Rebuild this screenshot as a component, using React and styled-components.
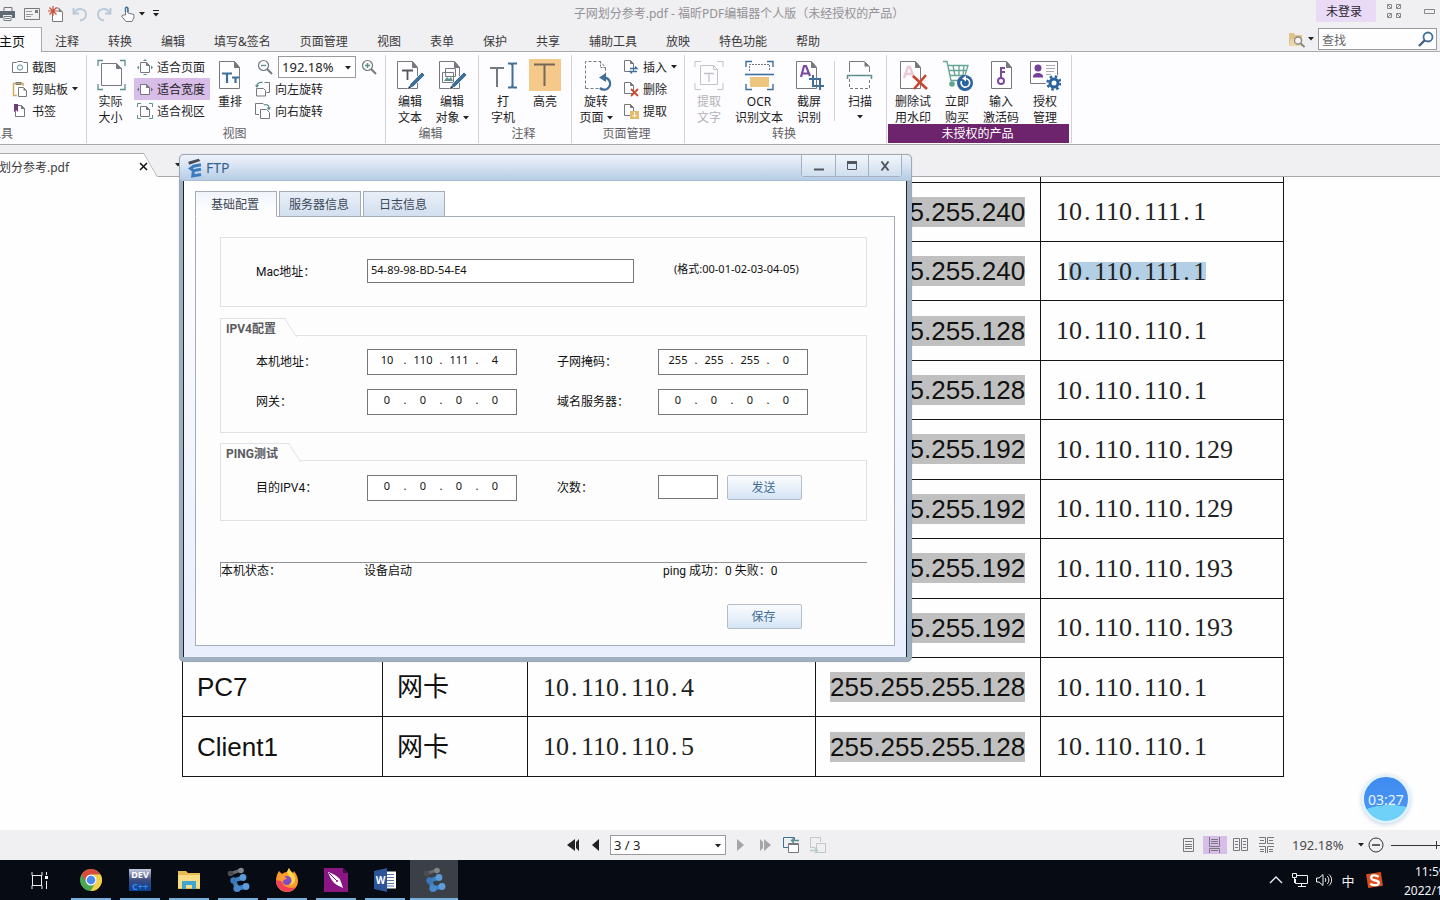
import React from 'react';
import styled, { createGlobalStyle, css } from 'styled-components';

const Global = createGlobalStyle`
  * { box-sizing: border-box; }
  html, body { margin: 0; padding: 0; }
  body {
    font-family: "Noto Sans", "Noto Sans CJK SC", sans-serif;
    font-size: 12px; color: #1e1e1e; overflow: hidden;
  }
  button, input, select { font-family: inherit; font-size: inherit; color: inherit; margin: 0; }
  button { border: 0; background: none; padding: 0; }
  svg { display: block; flex: none; }
`;

/* ---------- shared ---------- */
const Page = styled.div`
  position: relative; min-height: 100vh; display: flex; flex-direction: column;
  background: #f0eff1; overflow: hidden;
`;
const Icon = ({ w = 16, h, box, children }) => (
  <svg width={w} height={h || w} viewBox={box || `0 0 ${w} ${h || w}`} fill="none" aria-hidden="true">{children}</svg>
);
const Caret = ({ color = '#222' }) => (
  <svg width="6" height="4" viewBox="0 0 6 4" aria-hidden="true"><path d="M0 0h6L3 3.5z" fill={color} /></svg>
);

/* ---------- title bar ---------- */
const TitleBar = styled.header`
  height: 28px; display: flex; align-items: flex-start;
`;
const QuickTools = styled.div`
  width: 162px; height: 28px; display: flex; align-items: center; gap: 8px;
`;
const ToolButton = styled.button`
  display: flex; align-items: center; gap: 3px;
`;
const Title = styled.h1`
  flex: 1; margin: 0; text-align: center; font-size: 12px; font-weight: 400; line-height: 28px; color: #939296;
`;
const TitleRight = styled.div`
  width: 124px; display: flex; align-items: flex-start; overflow: hidden;
`;
const Login = styled.button`
  width: 60px; height: 22px; padding-right: 4px; background: #e9daf6; color: #2a2330; line-height: 24px;
`;
const WinTool = styled.button`
  height: 22px; margin-left: ${p => p.$gap}px; display: flex; align-items: center;
`;

/* ---------- menu ---------- */
const MenuBar = styled.div`
  height: 24px; display: flex; border-bottom: 1px solid #a9a8ab;
`;
const Menu = styled.nav`display: flex; flex: 1; height: 24px; margin-top: -1px;`;
const MenuItem = styled.button`
  height: 25px; padding: 3px 16px 0 13px; line-height: 24px; color: #3a3a3c; white-space: nowrap;
  ${p => p.$active && css`
    margin-left: -14px; font-size: 13px; background: #fdfcfe; color: #111; padding-top: 1px;
    border-top: 1px solid #a9a8ab; border-right: 1px solid #a9a8ab;
  `}
`;
const SearchArea = styled.div`
  display: flex; align-items: center; gap: 4px; padding-right: 3px; height: 22px;
`;
const SearchBox = styled.label`
  width: 119px; height: 22px; display: flex; align-items: center; padding: 0 2px 0 3px;
  border: 1px solid #9a999c; background: #fefdff;
  input { flex: 1; min-width: 0; border: 0; padding: 2px 0 0; background: none; outline: none; }
  input::placeholder { color: #666; opacity: 1; }
`;

/* ---------- ribbon ---------- */
const Ribbon = styled.section`
  height: 93px; display: flex; background: #fdfcfe; border-bottom: 1px solid #a9a8ab; padding-top: 2px;
`;
const Group = styled.div`
  width: ${p => p.$w}px; height: 88px; display: flex; flex-direction: column; flex: none;
  border-right: 1px solid #d3d1d6; margin-top: 1px;
`;
const GroupBody = styled.div`
  height: 69px; display: flex; padding-left: ${p => p.$pad || 0}px;
`;
const GroupLabel = styled.div`
  height: 19px; line-height: 20px; text-align: center; color: #636166; padding-right: 3px;
  ${p => p.$start && css`text-align: left; margin-left: -11px;`}
  ${p => p.$brand && css`background: #6d246c; color: #fff; margin: 0 2px 0 1px; padding-right: 2px;`}
`;
const BigBtn = styled.button`
  width: ${p => p.$w}px; display: flex; flex-direction: column; align-items: center; padding-top: 4px; flex: none;
  line-height: 16px; color: ${p => (p.$off ? '#b4b2b8' : '#1e1e1e')}; white-space: nowrap;
`;
const BigIcon = styled.span`
  width: 32px; height: 32px; margin-bottom: 3px; display: flex; flex: none; align-items: center; justify-content: center;
  background: ${p => (p.$hot ? '#f5c98a' : 'transparent')};
`;
const Line = styled.span`display: flex; align-items: center; gap: 3px; height: 16px;`;
const Stack = styled.div`
  display: flex; flex-direction: column; padding-top: 1px; padding-left: ${p => p.$pad || 0}px;
`;
const SmallBtn = styled.button`
  height: 22px; display: flex; align-items: center; gap: 4px; padding: 0 5px 0 3px; white-space: nowrap;
  background: ${p => (p.$on ? '#d8bde8' : 'transparent')};
`;
const InnerRule = styled.i`width: 1px; height: 60px; margin: 6px 0 0 1px; background: #d3d1d6;`;
const ZoomRow = styled.div`display: flex; align-items: center; gap: 5px; height: 22px; margin-left: 5px;`;
const Picker = styled.label`
  position: relative; display: block; width: ${p => p.$w}px; height: ${p => p.$h}px;
  select {
    appearance: none; width: 100%; height: 100%; padding: 0 3px; font-size: 13px; line-height: 18px; outline: none;
    border: 1px solid #9a999c; border-radius: 0; background: #fff; color: #222;
  }
  svg { position: absolute; right: 5px; top: 50%; margin-top: -1px; }
`;

/* ---------- document strip ---------- */
const TabStrip = styled.div`
  height: 32px; padding-top: 8px; display: flex; align-items: center; gap: 17px; border-bottom: 1px solid #a9a8ab;
`;
const DocTab = styled.div`
  position: relative; width: 158px; height: 24px; margin-bottom: -1px; padding: 2px 10px 0 0;
  display: flex; align-items: center; justify-content: space-between; color: #3c3c3e;
  background: #fefefe; border-top: 1px solid #a9a8ab; clip-path: polygon(0 0, 144px 0, 158px 100%, 0 100%);
`;
const TabEdge = styled.span`position: absolute; right: 0; top: -1px;`;
const TabName = styled.span`margin-left: -1px; flex: 1;`;
const TabClose = styled.button`color: #111;`;

/* ---------- document ---------- */
const Doc = styled.main`
  position: relative; flex: 1; min-height: 600px; background: #fefefe; padding-left: 182px;
`;
const Sheet = styled.table`
  width: 1102px; height: 600px; table-layout: fixed; border-collapse: collapse; color: #111;
  font-family: "Liberation Sans", "Noto Sans CJK SC", sans-serif; font-size: 26px; line-height: 30px;
  td { border: 1px solid #151515; padding: 0 14px; white-space: nowrap; }
  tr:first-child td { height: 5px; border-top: 0; }
`;
const Grey = styled.span`background: #c0c0c0;`;
const Addr = styled.span`
  font-family: "Liberation Serif", serif; padding-left: 1px; color: #222;
  i { display: inline-block; width: 12px; padding-left: 2px; font-style: normal; text-indent: 0; }
`;
const Marked = styled.span`background: linear-gradient(#b3cfe6, #b3cfe6) center / 100% 18px no-repeat;`;
const Timer = styled.div`
  position: absolute; right: 30px; bottom: 7px; width: 48px; height: 48px; border-radius: 50%;
  border: 2px solid #dff3ff; box-shadow: 0 1px 5px rgba(60, 110, 170, .35); overflow: hidden;
  display: flex; align-items: center; justify-content: center; color: #eaf6ff; font-size: 14px;
  background: radial-gradient(ellipse 34px 14px at 26px 42px, #6fd0f8 98%, transparent), linear-gradient(#3f8af0, #4c9bf6);
`;

/* ---------- status bar ---------- */
const StatusBar = styled.footer`
  height: 30px; display: flex; align-items: center; justify-content: space-between; padding-left: 567px;
`;
const PageNav = styled.div`display: flex; align-items: center; gap: 11px;`;
const ViewTools = styled.div`display: flex; align-items: center; width: 264px; overflow: hidden;`;
const ViewBtn = styled.button`
  width: 26px; height: 18px; display: flex; align-items: center; justify-content: center; flex: none;
  span { height: 18px; width: 24px; display: flex; align-items: center; justify-content: center; background: ${p => (p.$on ? '#d8bde8' : 'none')}; }
`;
const ZoomText = styled.span`width: 66px; margin-left: 12px; font-size: 13px; color: #4a4a4c; flex: none;`;
const ZoomOut = styled.button`margin: 0 7px 0 4px;`;
const Slider = styled.input`
  appearance: none; width: 90px; height: 12px; flex: none; outline: none;
  background: linear-gradient(#333, #333) 0 6px / 100% 1px no-repeat;
  &::-webkit-slider-thumb { appearance: none; width: 1px; height: 8px; background: #333; }
`;

/* ---------- task bar ---------- */
const TaskBar = styled.div`
  height: 40px; display: flex; background: #060b14; color: #f2f2f2;
`;
const TaskView = styled.button`width: 67px; padding-left: 12px; height: 40px; display: flex; justify-content: center; align-items: center;`;
const Task = styled.button`
  width: 49px; height: 40px; display: flex; align-items: center; justify-content: center; padding-right: 1px;
  background: linear-gradient(#76aede, #76aede) 4px 100% / 40px 2px no-repeat;
  ${p => p.$on && css`width: 48px; background: linear-gradient(#76aede, #76aede) bottom center / 48px 2px no-repeat, #3b3f47;`}
`;
const Tray = styled.div`
  margin-left: auto; width: 172px; display: flex; align-items: center; overflow: hidden; gap: 8px; white-space: nowrap;
`;
const Clock = styled.time`
  width: 36px; margin-left: 12px; line-height: 19px; flex: none; padding-top: 1px;
  span { display: block; }
  span:first-child { padding-left: 11px; }
`;
const Ime = styled.span`width: 16px; text-align: center; font-size: 13px;`;

/* ---------- FTP window ---------- */
const Win = styled.section`
  position: absolute; left: 179px; top: 154px; width: 733px; padding: 0 4px 4px 3px;
  border: 1px solid #a0a8b2; border-radius: 5px; background: #9fb0c3;
  box-shadow: 0 0 1px rgba(0, 0, 0, .3); color: #111; font-family: Roboto, "Noto Sans CJK SC", sans-serif;
`;
const WinTitle = styled.header`
  height: 26px; margin: 0 -4px 0 -3px; padding: 0 9px 0 7px; display: flex; align-items: flex-start; border-radius: 4px 4px 0 0;
  background: linear-gradient(#edf2fa, #dce6f4 35%, #b5cde5 95%, #a5b6ca);
`;
const WinName = styled.h2`
  flex: 1; margin: 0 0 0 3px; font: 400 14px/26px "Noto Sans", sans-serif; color: #35618f;
`;
const WinBtns = styled.div`
  display: flex; height: 22px; border: 1px solid #a3b0c2; border-top: 0; border-radius: 0 0 4px 4px;
`;
const WinBtn = styled.button`
  width: 33px; height: 21px; display: flex; align-items: center; justify-content: center;
  color: #50565f; background: linear-gradient(#f2f6fb, #cfdeee);
  & + & { border-left: 1px solid #a3b0c2; }
`;
const WinBody = styled.div`
  padding: 10px 11px 11px; border: 1px solid #1c222b; border-width: 0 1px;
  background: linear-gradient(#fff 10%, #f6f8fe 40%, #e9effd);
`;
const Tabs = styled.div`display: flex; gap: 2px; margin-bottom: -1px;`;
const Tab = styled.button`
  width: 82px; height: 26px; padding-right: 2px; line-height: 26px; border: 1px solid #a6abb8; color: #3b4656;
  background: ${p => (p.$on ? 'linear-gradient(#f0f4fb, #fdfdfe 70%)' : 'linear-gradient(#e9eff8, #d2dfef)')};
  border-bottom-color: ${p => (p.$on ? '#fdfdfe' : '#a6abb8')};
`;
const Panel = styled.div`
  height: 430px; border: 1px solid #a6abb8; background: #fdfdfe; padding: 20px 27px 0 24px;
`;
const Box = styled.div`
  height: ${p => p.$h}px; border: 1px solid #e0e1e6; padding: ${p => p.$top}px 0 0 35px;
  display: grid; grid-template-columns: 111px 190px 101px 1fr; grid-auto-rows: 26px; row-gap: 14px; align-items: start;
`;
const Caption = styled.h3`
  position: relative; width: ${p => p.$w}px; height: 18px; margin: ${p => p.$gap}px 0 -1px; padding-left: 5px;
  font-size: 12px; line-height: 20px; font-weight: 700; color: #5a5b60; background: #fdfdfe;
  border: 1px solid #e0e1e6; border-width: 1px 0 0 1px; white-space: nowrap;
  span { position: relative; z-index: 1; }
  &::after {
    content: ""; position: absolute; top: -1px; right: -11px; width: 16px; height: 18px; background: #fdfdfe;
    border: 1px solid #e0e1e6; border-width: 1px 1px 0 0; transform: skewX(33deg); transform-origin: center;
  }
`;
const Label = styled.label`line-height: 26px; height: 26px; color: #111; white-space: nowrap;`;
const Hint = styled.span`
  grid-column: 4; padding-left: 16px; white-space: nowrap;
  font: 11px/20px "Noto Sans", "Noto Sans CJK SC", sans-serif;
`;
const TextBox = styled.input`
  width: ${p => p.$w}px; height: 24px; padding: 0 3px 3px; border: 1px solid #76777c; background: #fff;
  outline: none; font: 11px "Noto Sans", sans-serif; ${p => p.$wide && css`grid-column: 2 / 4;`}
`;
const IpBox = styled.div`
  width: 150px; height: 26px; padding: 0 0 6px 3px; border: 1px solid #76777c; background: #fff;
  display: flex; align-items: center; font-size: 11px; font-family: "Noto Sans", sans-serif;
  input { width: 32px; height: 18px; border: 0; padding: 0; text-align: center; background: none; outline: none; }
  span { width: 4px; text-align: center; }
`;
const Pair = styled.div`display: flex; gap: 9px;`;
const Push = styled.button`
  width: 75px; height: 25px; padding: 0 2px 2px 0; border: 1px solid #b4bcc8; border-radius: 2px; color: #3f6c99;
  background: linear-gradient(#fafcfe, #e6eff9 60%, #d3e3f4);
`;
const State = styled.div`
  height: 42px; margin-top: 41px; border-top: 1px solid #8f9196; display: grid;
  grid-template-columns: 144px 299px 1fr; line-height: 17px;
  span:first-child { border-left: 1px solid #8f9196; height: 14px; }
`;
const SaveRow = styled.div`padding-left: 507px;`;

/* ---------- drawings ---------- */
const G = '#77787d';
const T = '#5d8f8f';
const B = '#3f6f9b';

const MiniPage = ({ x = 0, y = 0, c = G }) => (
  <g transform={`translate(${x} ${y})`} stroke={c}><path d="M.5.5h6l3 3v8h-9z" fill="#fefdff" /><path d="M6.5.5v3h3z" fill={c} /></g>
);
const MidPage = () => (
  <g stroke={G}><path d="M3.500 3.500h6l3 3v7h-9z" fill="#fefdff" /><path d="M9.500 3.500v3h3z" fill={G} /></g>
);
const BigPage = ({ x = 4, y = 2, c = G }) => (
  <g transform={`translate(${x} ${y})`} stroke={c}>
    <path d="M.5.5h15l5 6v21H.5z" fill="#fefdff" /><path d="M15.5.5v6h5z" fill={c} />
  </g>
);
const Pencil = () => (
  <g><path d="M14 30l2-5L28 13l3 3-12 12z" fill={B} stroke="#fff" strokeWidth=".8" /><path d="M14 30l1-3 2 2z" fill="#234" /></g>
);

const I = {
  actual: <><path d="M3 7V1.500h5M25 1.500h5V7M3 25v5.500h5M30 25v5.500h-5" stroke={T} strokeWidth="1.300" /><g stroke={G}><path d="M6.500 4.500h15l5 5v17h-20z" fill="#fefdff" /><path d="M21.500 4.500v5h5z" fill={G} /></g></>,
  reflow: <><BigPage x={5} y={2} /><path d="M8 14.500h10M13 14v10M18 18.500h7M21.500 18v6" stroke={B} strokeWidth="2.200" /></>,
  editText: <><BigPage x={3} y={2} /><path d="M8 11.500h11M13.500 11v10" stroke="#55565c" strokeWidth="1.800" /><Pencil /></>,
  editObj: <><BigPage x={3} y={2} /><path d="M9.500 9.500h10v8h-10zM6.500 13.500h11v10h-11z" fill="#fefdff" stroke={G} /><path d="M8 22l3-4 2 2 2-2 2 4z" fill={T} /><Pencil /></>,
  typer: <><path d="M3 9h14M10 9v19" stroke={G} strokeWidth="2" /><path d="M21 4.500h3l1 1 1-1h4M21 28.500h3l1-1 1 1h4M25.500 5v23" stroke={B} strokeWidth="2" /></>,
  high: <path d="M5 5.500h21M15.500 5v22" stroke="#75685b" strokeWidth="2" />,
  rotPage: <><g stroke={G}><path d="M5.500 29.500v-27h15l5 6v8" strokeDasharray="3 2" /><path d="M20.500 2.500v6h5" strokeDasharray="2 1" /><path d="M5.500 29.500h13" strokeDasharray="3 2" /></g><path d="M20 29a6 6 0 1 0 2-10" stroke={B} strokeWidth="2.400" /><path d="M26 14v9l-7-4.500z" fill={B} /></>,
  extText: <g stroke="#c4c2ca"><path d="M2 8V2.500h6M24 2.500h6V8M2 24v6.500h6M30 24v6.500h-6" /><path d="M7.500 6.500h13l4 4v15h-17zM20.500 6.500v4h4" /><path d="M11 14.500h10M16 14v9" strokeWidth="1.300" /></g>,
  ocr: <><path d="M3 8V2.500h6M24 2.500h6V8M3 25v5.500h6M30 25v5.500h-6" stroke={B} strokeWidth="1.400" /><path d="M6.500 12V5.500h20V12" stroke={G} strokeDasharray="2 1" /><path d="M2 15.500h29" stroke={B} strokeWidth="1.600" /><path d="M7 18h19v10H7z" fill="#ecc57f" /></>,
  shot: <><BigPage x={3} y={2} /><path d="M8 18l3-11h2l4 10M9.500 14.500h6" stroke="#7b4aa0" strokeWidth="2.200" /><path d="M20 16v11h11M16 20h11v11" stroke={B} strokeWidth="2" /></>,
  scan: <><path d="M5.500 13V2.500h15l5 5V13" stroke={G} /><path d="M20.500 2.500v5h5z" fill={G} /><path d="M3.500 20v-3.500h24V20" stroke={T} strokeWidth="1.500" /><path d="M5.500 20v9.500h20V20" stroke={G} strokeDasharray="3 2" /></>,
  wmark: <><BigPage x={3} y={2} /><path d="M7 19l4-11h2l4 11M9 15h6" stroke="#ecc9d4" strokeWidth="2.400" /><path d="M16 17l14 13M29 16L17 30" stroke="#c9452f" strokeWidth="2.600" /></>,
  cart: <><path d="M2 2.500h4l4 19h10M7 6.500h20l-3 10H9M12 6.500l2 10M18 6.500v10M23 6.500l-1 10M8 11.500h17" stroke="#63a58e" strokeWidth="1.300" /><circle cx="11" cy="25" r="2.800" fill="#63a58e" /><circle cx="24" cy="24" r="8" fill="#2b62a0" /><path d="M20.500 22a4.300 4.300 0 1 0 4-2.500" stroke="#fff" strokeWidth="1.600" /><path d="M25 16.500v6l-4-3z" fill="#fff" /></>,
  keyPage: <><BigPage x={6} y={2} /><circle cx="16" cy="22" r="3" stroke="#7b4aa0" strokeWidth="2" /><path d="M16 19V8M16 9h4M16 13h4" stroke="#7b4aa0" strokeWidth="2" /></>,
  auth: <><path d="M1.500 2.500h27v22h-27z" fill="#fefdff" stroke={G} /><circle cx="9" cy="9" r="3.500" fill="#74409a" /><path d="M4 18.500c-1-6 11-6 10 0z" fill="#74409a" /><path d="M17 6.500h9M17 9.500h9M17 12.500h8M17 15.500h5" stroke="#aaa" /><circle cx="25" cy="24" r="8.500" fill="#fefdff" /><circle cx="25" cy="24" r="4" stroke="#2b62a0" strokeWidth="3" /><circle cx="25" cy="24" r="6.500" stroke="#2b62a0" strokeWidth="2.400" strokeDasharray="2.550 2.550" /></>,
  camera: <><path d="M.500 3.500h4l1-1h5l1 1h4v10H.500z" stroke={G} /><circle cx="8" cy="8.500" r="2.600" stroke={T} /></>,
  paste: <><path d="M5 14.500H1.500v-12H11V5" stroke="#d2ac5c" strokeWidth="1.500" /><path d="M4 1.500h5v2H4z" stroke={G} /><path d="M6.500 6.500h5l3 3v6h-8z" fill="#fefdff" stroke={G} /><path d="M11.500 6.500v3h3z" fill={G} /></>,
  bookmark: <><g transform="translate(3 2)"><MiniPage /></g><path d="M2 1h4v8L4 7 2 9z" fill="#6e3d7e" /></>,
  fitPage: <><MidPage /><path d="M8 0l2 2H6zM8 17l2-2H6zM0 8.500l2-2v4zM16 8.500l-2-2v4z" fill={T} /></>,
  fitWidth: <><MidPage /><path d="M0 8.500l2-2v4zM16 8.500l-2-2v4z" fill="#6f6a86" /></>,
  fitView: <><MidPage /><path d="M.500 4V.500H4M12 .500h3.500V4M.500 12v3.500H4M12 15.500h3.500V12" stroke={T} /></>,
  minus: <><circle cx="6.500" cy="6.500" r="5" stroke={G} strokeWidth="1.200" /><path d="M4 6.500h5" stroke={T} strokeWidth="1.400" /><path d="M10 10l5 5" stroke={G} strokeWidth="2" /></>,
  plus: <><circle cx="6.500" cy="6.500" r="5" stroke={G} strokeWidth="1.200" /><path d="M4 6.500h5M6.500 4v5" stroke={T} strokeWidth="1.400" /><path d="M10 10l5 5" stroke={G} strokeWidth="2" /></>,
  rotL: <><path d="M9.500 1.500h5v10h-3M1.500 7.500h7l2 2v5.500h-9z" stroke={G} /><path d="M1.500 6c0-3 2-5 6-4.500" stroke={T} strokeWidth="1.300" /><path d="M0 4h4L2 7z" fill={T} /></>,
  rotR: <><path d="M4 11.500H.500v-11H8l1 1" stroke={G} /><path d="M5.500 6.500h6l3 3v6h-9z" fill="#fefdff" stroke={G} /><path d="M9 2c3-1 5 0 5 3" stroke={T} strokeWidth="1.300" /><path d="M11.500 4.500h4.500l-2 3z" fill={T} /></>,
  insert: <><MiniPage x={1} y={1} /><path d="M7 9.500h7l-2-2M14 12.500H7l2 2" stroke={B} strokeWidth="1.300" /></>,
  del: <><MiniPage x={1} y={1} /><path d="M8 8l7 7M15 8l-7 7" stroke="#cb4c36" strokeWidth="1.800" /></>,
  ext: <><MiniPage x={1} y={1} /><path d="M7 8h9v8H7z" fill="#e3bb6b" /><path d="M11.500 9v5M9.500 12l2 2 2-2" stroke="#fff" /></>,
};

const Ensp = () => (
  <Icon w={28}>
    <g strokeLinecap="round" strokeLinejoin="round">
      <path d="M7 7.500l10-3.500" stroke="#66676b" strokeWidth="3.400" />
      <circle cx="6.500" cy="7.500" r="2.800" fill="#4c4d51" /><circle cx="17" cy="4.500" r="2.800" fill="#85868a" />
      <path d="M19 11.500L10 14.500l3 8 9-2" stroke="#3f7fc0" strokeWidth="4.400" />
      <circle cx="19" cy="11.500" r="3.400" fill="#5a9bd8" /><circle cx="9.500" cy="14.500" r="3.200" fill="#3b78b8" />
      <circle cx="13" cy="22.500" r="3.600" fill="#4a8aca" /><circle cx="22" cy="20.500" r="3.400" fill="#5b9edb" />
    </g>
  </Icon>
);

/* ---------- ribbon parts ---------- */
const Big = ({ icon, lines, w, off, hot, caret }) => (
  <BigBtn type="button" $w={w} $off={off} disabled={off}>
    <BigIcon $hot={hot}><Icon w={32}>{I[icon]}</Icon></BigIcon>
    {lines.map((t, i) => <Line key={t}>{t}{caret && i === lines.length - 1 && <Caret />}</Line>)}
  </BigBtn>
);
const Small = ({ icon, text, on, caret }) => (
  <SmallBtn type="button" $on={on}><Icon>{I[icon]}</Icon>{text}{caret && <Caret />}</SmallBtn>
);
const RibbonView = () => (
  <Ribbon>
    <Group $w={87}>
      <GroupBody $pad={9}>
        <Stack><Small icon="camera" text="截图" /><Small icon="paste" text="剪贴板" caret /><Small icon="bookmark" text="书签" /></Stack>
      </GroupBody>
      <GroupLabel $start>工具</GroupLabel>
    </Group>
    <Group $w={299}>
      <GroupBody>
        <Big icon="actual" w={47} lines={['实际', '大小']} />
        <Stack><Small icon="fitPage" text="适合页面" /><Small icon="fitWidth" text="适合宽度" on /><Small icon="fitView" text="适合视区" /></Stack>
        <Big icon="reflow" w={40} lines={['重排']} />
        <Stack $pad={2}>
          <ZoomRow>
            <ToolButton type="button" aria-label="缩小"><Icon>{I.minus}</Icon></ToolButton>
            <Picker $w={78} $h={22}><select aria-label="缩放"><option>192.18%</option></select><Caret /></Picker>
            <ToolButton type="button" aria-label="放大"><Icon>{I.plus}</Icon></ToolButton>
          </ZoomRow>
          <Small icon="rotL" text="向左旋转" /><Small icon="rotR" text="向右旋转" />
        </Stack>
      </GroupBody>
      <GroupLabel>视图</GroupLabel>
    </Group>
    <Group $w={93}>
      <GroupBody $pad={3}><Big icon="editText" w={42} lines={['编辑', '文本']} /><Big icon="editObj" w={42} lines={['编辑', '对象']} caret /></GroupBody>
      <GroupLabel>编辑</GroupLabel>
    </Group>
    <Group $w={93}>
      <GroupBody $pad={3}><Big icon="typer" w={42} lines={['打', '字机']} /><Big icon="high" w={42} hot lines={['高亮']} /></GroupBody>
      <GroupLabel>注释</GroupLabel>
    </Group>
    <Group $w={113}>
      <GroupBody>
        <Big icon="rotPage" w={48} lines={['旋转', '页面']} caret />
        <Stack><Small icon="insert" text="插入" caret /><Small icon="del" text="删除" /><Small icon="ext" text="提取" /></Stack>
      </GroupBody>
      <GroupLabel>页面管理</GroupLabel>
    </Group>
    <Group $w={202}>
      <GroupBody>
        <Big icon="extText" w={48} off lines={['提取', '文字']} />
        <Big icon="ocr" w={52} lines={['OCR', '识别文本']} />
        <Big icon="shot" w={48} lines={['截屏', '识别']} />
        <InnerRule />
        <Big icon="scan" w={50} lines={['扫描', '']} caret />
      </GroupBody>
      <GroupLabel>转换</GroupLabel>
    </Group>
    <Group $w={185}>
      <GroupBody $pad={4}>
        <Big icon="wmark" w={44} lines={['删除试', '用水印']} />
        <Big icon="cart" w={44} lines={['立即', '购买']} />
        <Big icon="keyPage" w={44} lines={['输入', '激活码']} />
        <Big icon="auth" w={44} lines={['授权', '管理']} />
      </GroupBody>
      <GroupLabel $brand>未授权的产品</GroupLabel>
    </Group>
  </Ribbon>
);

/* ---------- document table ---------- */
const ROWS = [
  ['', '', '', '255.255.255.240', '10.110.111.1'],
  ['', '', '', '255.255.255.240', '10.110.111.1'],
  ['', '', '', '255.255.255.128', '10.110.110.1'],
  ['', '', '', '255.255.255.128', '10.110.110.1'],
  ['', '', '', '255.255.255.192', '10.110.110.129'],
  ['', '', '', '255.255.255.192', '10.110.110.129'],
  ['', '', '', '255.255.255.192', '10.110.110.193'],
  ['', '', '', '255.255.255.192', '10.110.110.193'],
  ['PC7', '网卡', '10.110.110.4', '255.255.255.128', '10.110.110.1'],
  ['Client1', '网卡', '10.110.110.5', '255.255.255.128', '10.110.110.1'],
];
const dots = text => text.split('.').map((t, i) => <React.Fragment key={i}>{i > 0 && <i>.</i>}{t}</React.Fragment>);
const Address = ({ text, marked }) => (
  <Addr>{marked ? <>{text[0]}<Marked>{dots(text.slice(1))}</Marked></> : dots(text)}</Addr>
);

/* ---------- FTP window parts ---------- */
const Ip = ({ id, name, value }) => (
  <IpBox role="group" aria-label={name}>
    {value.map((v, i) => (
      <React.Fragment key={i}>
        {i > 0 && <span>.</span>}
        <input id={i === 0 ? id : undefined} aria-label={i ? `${name} ${i + 1}` : undefined} defaultValue={v} />
      </React.Fragment>
    ))}
  </IpBox>
);
const FtpWindow = () => (
  <Win aria-label="FTP">
    <WinTitle>
      <Icon w={16} h={24} box="4 -3 20 32">
        <path d="M5 6l14-4 2 3-15 5z" fill="#4a4b50" />
        <path d="M22 10l-10 2-4 3 4 3 10-2M12 17l-1 8 11-2" stroke="#3b7cc0" strokeWidth="4" />
      </Icon>
      <WinName>FTP</WinName>
      <WinBtns>
        <WinBtn type="button" aria-label="最小化"><Icon w={12}><path d="M1 9.500h10" stroke="#50565f" strokeWidth="2" /></Icon></WinBtn>
        <WinBtn type="button" aria-label="最大化"><Icon w={12}><path d="M1 2.500h10" stroke="#50565f" strokeWidth="3" /><path d="M1.500 2.500h9v7h-9z" stroke="#50565f" /></Icon></WinBtn>
        <WinBtn type="button" aria-label="关闭"><Icon w={12}><path d="M2.500 1.500l7 9M9.500 1.500l-7 9" stroke="#50565f" strokeWidth="2" /></Icon></WinBtn>
      </WinBtns>
    </WinTitle>
    <WinBody>
      <Tabs role="tablist">
        <Tab type="button" role="tab" aria-selected="true" $on>基础配置</Tab>
        <Tab type="button" role="tab">服务器信息</Tab>
        <Tab type="button" role="tab">日志信息</Tab>
      </Tabs>
      <Panel>
        <Box $h={70} $top={21}>
          <Label htmlFor="mac">Mac地址：</Label>
          <TextBox id="mac" $w={267} $wide defaultValue="54-89-98-BD-54-E4" />
          <Hint>(格式:00-01-02-03-04-05)</Hint>
        </Box>
        <Caption $w={60} $gap={11}><span>IPV4配置</span></Caption>
        <Box $h={98} $top={13}>
          <Label htmlFor="host">本机地址：</Label><Ip id="host" name="本机地址" value={['10', '110', '111', '4']} />
          <Label htmlFor="mask">子网掩码：</Label><Ip id="mask" name="子网掩码" value={['255', '255', '255', '0']} />
          <Label htmlFor="gw">网关：</Label><Ip id="gw" name="网关" value={['0', '0', '0', '0']} />
          <Label htmlFor="dns">域名服务器：</Label><Ip id="dns" name="域名服务器" value={['0', '0', '0', '0']} />
        </Box>
        <Caption $w={64} $gap={10}><span>PING测试</span></Caption>
        <Box $h={61} $top={14}>
          <Label htmlFor="dest">目的IPV4：</Label><Ip id="dest" name="目的IPV4" value={['0', '0', '0', '0']} />
          <Label htmlFor="count">次数：</Label>
          <Pair><TextBox id="count" $w={60} /><Push type="button">发送</Push></Pair>
        </Box>
        <State><span>本机状态：</span><span>设备启动</span><span>ping 成功：0 失败：0</span></State>
        <SaveRow><Push type="button">保存</Push></SaveRow>
      </Panel>
    </WinBody>
  </Win>
);

/* ---------- page ---------- */
const MENU = ['主页', '注释', '转换', '编辑', '填写&签名', '页面管理', '视图', '表单', '保护', '共享', '辅助工具', '放映', '特色功能', '帮助'];

export default function App() {
  return (
    <Page>
      <Global />
      <TitleBar>
        <QuickTools>
          <ToolButton type="button" aria-label="打印"><Icon><path d="M4 1.500h8v4H4z" stroke={G} /><path d="M0 5h15v7h-3V9H3v3H0z" fill="#606a72" /><path d="M4 10.500h7v4H4z" fill="#fff" stroke={G} /><path d="M5 12.500h5" stroke={T} /></Icon></ToolButton>
          <ToolButton type="button" aria-label="邮件"><Icon><path d="M.500 2.500h15v11H.500z" stroke={G} /><path d="M2 5.500h6M2 8.500h7M2 10.500h5" stroke="#999" /><path d="M11 4h3v3h-3z" fill={G} /></Icon></ToolButton>
          <ToolButton type="button" aria-label="新建"><Icon><path d="M4.500 7v8.500h10V6l-4-4H8" stroke={G} fill="#fefdff" /><path d="M10.500 2v4h4z" fill={G} /><path d="M5 0v10M0 5h10M1.500 1.500l7 7M8.500 1.500l-7 7" stroke="#cd5138" strokeWidth="1.200" /></Icon></ToolButton>
          <ToolButton type="button" aria-label="撤销"><Icon><path d="M1.500 2v5.500H7M2 7c3-6 12-5 12 1.500 0 3-2 5.500-6 6" stroke="#b8c8d8" strokeWidth="1.800" /></Icon></ToolButton>
          <ToolButton type="button" aria-label="重做"><Icon><path d="M14.500 2v5.500H9M14 7C11 1 2 2 2 8.500c0 3 2 5.500 6 6" stroke="#b8c8d8" strokeWidth="1.800" /></Icon></ToolButton>
          <ToolButton type="button" aria-label="手形工具"><Icon><path d="M5.500 9V2.500a1.200 1.200 0 0 1 2.400 0V7l6 1.500V12l-2 3.500H6L1.500 10l1.500-1z" fill="#fefdff" stroke={G} /><path d="M5.500 6V2.500a1.200 1.200 0 0 1 2.400 0V6" stroke={B} strokeWidth="1.400" /></Icon><Caret /></ToolButton>
          <ToolButton type="button" aria-label="更多"><Icon w={6} h={8}><path d="M0 .500h6" stroke="#222" /><path d="M0 3h6L3 6.500z" fill="#222" /></Icon></ToolButton>
        </QuickTools>
        <Title>子网划分参考.pdf - 福昕PDF编辑器个人版（未经授权的产品）</Title>
        <TitleRight>
          <Login type="button">未登录</Login>
          <WinTool type="button" $gap={11} aria-label="全屏"><Icon w={14}><g stroke="#88878b"><path d="M.500.500h4v4h-4zM9.500.500h4v4h-4zM.500 9.500h4v4h-4zM9.500 9.500h4v4h-4zM1 1l3 3M13 1l-3 3M1 13l3-3M13 13l-3-3" /></g></Icon></WinTool>
          <WinTool type="button" $gap={23} aria-label="最小化"><Icon w={11} h={5}><path d="M.500.500h10v4H.500z" stroke="#88878b" /></Icon></WinTool>
        </TitleRight>
      </TitleBar>
      <MenuBar>
        <Menu>{MENU.map((m, i) => <MenuItem type="button" key={m} $active={i === 0}>{m}</MenuItem>)}</Menu>
        <SearchArea>
          <ToolButton type="button" aria-label="搜索文件夹"><Icon w={17}><path d="M1 2h5l1 2h7v11H1z" fill="#dfc38c" /><path d="M3 8h12l-2 7H1z" fill="#eed7a6" /><circle cx="10" cy="9.500" r="3.500" fill="#f8f4f8" stroke="#888" strokeWidth="1.300" /><path d="M12.500 12l4 4" stroke="#888" strokeWidth="1.800" /></Icon><Caret /></ToolButton>
          <SearchBox><input aria-label="查找" placeholder="查找" /><Icon><circle cx="10" cy="6" r="4.500" stroke={B} strokeWidth="1.800" /><path d="M7 9l-6 6" stroke="#4b6075" strokeWidth="2.400" /></Icon></SearchBox>
        </SearchArea>
      </MenuBar>
      <RibbonView />
      <TabStrip>
        <DocTab>
          <TabName>划分参考.pdf</TabName>
          <TabClose type="button" aria-label="关闭标签"><Icon w={9}><path d="M1 1l7 7M8 1L1 8" stroke="#111" strokeWidth="1.500" /></Icon></TabClose>
          <TabEdge><Icon w={15} h={24}><path d="M0 .500h1L14.500 24" stroke="#a9a8ab" /></Icon></TabEdge>
        </DocTab>
        <Caret />
      </TabStrip>
      <Doc>
        <Sheet>
          <colgroup><col style={{ width: 200 }} /><col style={{ width: 145 }} /><col style={{ width: 288 }} /><col style={{ width: 225 }} /><col /></colgroup>
          <tbody>
            <tr><td /><td /><td /><td /><td /></tr>
            {ROWS.map((r, i) => (
              <tr key={i}>
                <td>{r[0]}</td><td>{r[1]}</td><td>{r[2] && <Address text={r[2]} />}</td>
                <td><Grey>{r[3]}</Grey></td><td><Address text={r[4]} marked={i === 1} /></td>
              </tr>
            ))}
          </tbody>
        </Sheet>
        <Timer>03:27</Timer>
      </Doc>
      <StatusBar>
        <PageNav>
          <ToolButton type="button" aria-label="第一页"><Icon w={13} h={14}><path d="M8 1v12L0 7zM12 1v12l-3-3V4z" fill="#222" /></Icon></ToolButton>
          <ToolButton type="button" aria-label="上一页"><Icon w={8} h={14}><path d="M8 1v12L1 7z" fill="#222" /></Icon></ToolButton>
          <Picker $w={116} $h={20}><select aria-label="页码"><option>3 / 3</option></select><Caret /></Picker>
          <ToolButton type="button" aria-label="下一页"><Icon w={8} h={14}><path d="M0 1v12l7-6z" fill="#a5a4a8" /></Icon></ToolButton>
          <ToolButton type="button" aria-label="最后一页"><Icon w={16} h={14}><path d="M8 1v12l7-6zM4 1v12l3-3V4z" fill="#a5a4a8" /></Icon></ToolButton>
          <ToolButton type="button" aria-label="上一视图"><Icon><path d="M5 10.500H.500v-10h11V3" stroke={B} /><path d="M5.500 6.500h10v9h-10z" fill="#fff" stroke={G} /><path d="M5 7.500h11" stroke={G} /><path d="M16 3.500H9M11 1L8.500 3.500 11 6" stroke={T} strokeWidth="1.400" /></Icon></ToolButton>
          <ToolButton type="button" aria-label="下一视图"><Icon><path d="M5 10.500H.500v-10h10V5" stroke="#c2c6cc" /><path d="M6.500 6.500h9v9h-9z" stroke="#c2c6cc" /><path d="M0 13.500h7M5 11l2.500 2.500L5 16" stroke="#b3cbc8" strokeWidth="1.400" /></Icon></ToolButton>
        </PageNav>
        <ViewTools>
          <ViewBtn type="button" aria-label="单页"><span><Icon w={12} h={14}><path d="M.500.500h10v13H.500zM2 3.500h7M2 6.500h7M2 8.500h7M2 10.500h7" stroke={G} /></Icon></span></ViewBtn>
          <ViewBtn type="button" $on aria-label="连续"><span><Icon w={12} h={16}><path d="M.500 0v9.500h10V0M2 2.500h7M2 4.500h7M2 6.500h7M.500 16v-4.500h10V16M2 13.500h7" stroke={G} /></Icon></span></ViewBtn>
          <ViewBtn type="button" aria-label="双页"><span><Icon w={16} h={14}><path d="M.500.500h6v12h-6zM8.500.500h6v12h-6zM2 3.500h3M2 6.500h3M2 9.500h3M10 3.500h3M10 6.500h3M10 9.500h3" stroke={G} /></Icon></span></ViewBtn>
          <ViewBtn type="button" aria-label="连续双页"><span><Icon w={16}><path d="M0 .500h6.500v6H0M15 .500H8.500v6H15M0 9.500h6.500V16M15 9.500H8.500V16M1 3.500h4M10 3.500h4M1 12.500h4M10 12.500h4M1 14.500h4M10 14.500h4" stroke={G} /></Icon></span></ViewBtn>
          <ZoomText>192.18%</ZoomText><Caret />
          <ZoomOut type="button" aria-label="缩小"><Icon w={16}><circle cx="8" cy="8" r="7" stroke="#333" /><path d="M4 8h8" stroke="#333" strokeWidth="1.500" /></Icon></ZoomOut>
          <Slider type="range" aria-label="缩放比例" />
        </ViewTools>
      </StatusBar>
      <TaskBar>
        <TaskView type="button" aria-label="任务视图"><Icon w={17}><path d="M1 0v3.500h10V0M1.500 4v9M10.500 4v9M1 17v-3.500h10V17M15.500 0v3M15.500 9v8" stroke="#eee" /><path d="M14 4h3v3h-3z" fill="#fff" /></Icon></TaskView>
        <Task type="button" aria-label="Chrome"><Icon w={24}><circle cx="12" cy="12" r="11" fill="#4aa853" /><path d="M2.500 6.500A11 11 0 0 1 21.500 6.500H12a5.500 5.500 0 0 0-4.800 8.200z" fill="#dc4a3e" /><path d="M21.500 6.500A11 11 0 0 1 11.500 23l5.200-8.500A5.500 5.500 0 0 0 12 6.500z" fill="#f8cf4b" /><circle cx="12" cy="12" r="5.500" fill="#fff" /><circle cx="12" cy="12" r="4.300" fill="#4a8af0" /></Icon></Task>
        <Task type="button" aria-label="Dev-C++"><Icon w={24}><defs><linearGradient id="dv" x2="0" y2="1"><stop stopColor="#c6cbe0" /><stop offset=".5" stopColor="#3c4b80" /><stop offset="1" stopColor="#0c3f94" /></linearGradient></defs><path d="M1 1h22v22H1z" fill="url(#dv)" /><text x="12" y="10" fill="#fff" fontSize="9" fontWeight="700" textAnchor="middle">DEV</text><text x="12" y="22" fill="#2a8cf0" fontSize="9" fontWeight="700" textAnchor="middle">C++</text></Icon></Task>
        <Task type="button" aria-label="资源管理器"><Icon w={24}><path d="M1 3h8l2 2h12v16H1z" fill="#e8bb52" /><path d="M1 7h22v13H1z" fill="#f9dd86" /><path d="M5 21v-8h14v8h-4v-4H9v4z" fill="#3ea6d0" /></Icon></Task>
        <Task type="button" aria-label="eNSP"><Ensp /></Task>
        <Task type="button" aria-label="Firefox"><Icon w={24}><path d="M4 3l3 3c1-1 3-2 5-2l2-4c1 3 3 4 4 5l1-2c3 4 4 7 4 10a11 11 0 0 1-22 0c0-4 1-7 3-10z" fill="#fb9a2c" /><path d="M14 0c1 4 5 5 6 9 1 5-2 8-6 8 4-5-1-10-2-13z" fill="#ffd84a" /><path d="M1 12a11 11 0 0 0 20 7c-4 2-12 1-14-5-2-2-5-1-6-2z" fill="#f0405a" /><circle cx="12" cy="12.500" r="4.500" fill="#7f4cc4" /><path d="M5 9c3-2 6 0 7 2-2 0-4 1-4 3-2-1-3-3-3-5z" fill="#fb9b36" /></Icon></Task>
        <Task type="button" aria-label="福昕"><Icon w={24}><path d="M0 0h19l5 5v19H0z" fill="#8a1683" /><path d="M19 0l5 5h-5z" fill="#3c0d42" /><path d="M4 4c6 2 12 5 13 10l2 6-6-3C9 15 6 10 4 4z" fill="#fff" /><path d="M5 5l8 8" stroke="#8a1683" /><circle cx="13" cy="13" r="1" fill="#8a1683" /></Icon></Task>
        <Task type="button" aria-label="Word"><Icon w={24}><path d="M12 3.500h11v17H12z" fill="#fff" /><path d="M14 6.500h7M14 9.500h7M14 12.500h7M14 15.500h7M14 18h7" stroke="#5876a8" /><path d="M1 3l13-3v24L1 21z" fill="#2c5597" /><text x="7.500" y="16" fill="#fff" fontSize="10" fontWeight="700" textAnchor="middle">W</text></Icon></Task>
        <Task type="button" $on aria-label="eNSP FTP"><Ensp /></Task>
        <Tray>
          <Icon><path d="M2 11l6-6 6 6" stroke="#f2f2f2" strokeWidth="1.300" /></Icon>
          <Icon><path d="M5 3.500h10.500v8H3.500V7M6 14.500h8M9.500 12v2M.500 1.500h4v4h-4zM2.500 6v5" stroke="#f2f2f2" /></Icon>
          <Icon><path d="M.500 6v4H3l4 3.500v-11L3 6z" stroke="#f2f2f2" /><path d="M9 6c1 1 1 3 0 4M11 4c2.500 2 2.500 6 0 8M13 2.500c3.500 3 3.500 8 0 11" stroke="#f2f2f2" /></Icon>
          <Ime>中</Ime>
          <Icon w={20} box="-3 -1 19 19"><path d="M-1 3l14-2 2 13-14 2z" fill="#d84f1e" /><path d="M11 5.500C7 3 3 4 4 7s7 1 7 4-5 3-8 1" stroke="#fff" strokeWidth="2.200" /></Icon>
          <Clock><span>11:59</span><span>2022/1</span></Clock>
        </Tray>
      </TaskBar>
      <FtpWindow />
    </Page>
  );
}
